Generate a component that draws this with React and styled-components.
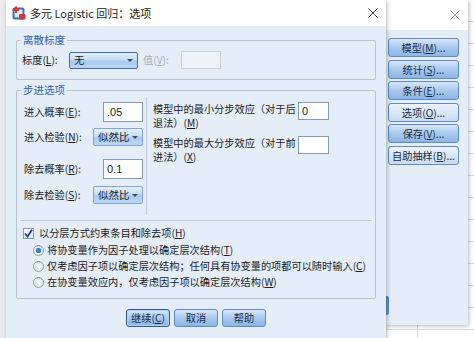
import React from 'react';
import styled, { createGlobalStyle } from 'styled-components';

const GlobalStyle = createGlobalStyle`
  html, body { margin: 0; padding: 0; }
  body {
    width: 474px;
    height: 338px;
    overflow: hidden;
    font-family: "Noto Sans CJK SC", "Noto Sans", sans-serif;
    color: #1c1c1c;
  }
`;

const Desktop = styled.div`
  position: relative;
  width: 474px;
  height: 338px;
  overflow: hidden;
  background-color: #fff;
  background-image:
    linear-gradient(to right, #ececec 0 6px, transparent 6px),
    linear-gradient(to right, transparent 417px, #d6d6d6 417px 418px, transparent 418px),
    repeating-linear-gradient(to bottom, transparent 0 21px, #d8d8d8 21px 22px);
`;

const Window = styled.div`
  position: absolute;
  top: 0;
  left: ${p => p.$left}px;
  width: ${p => p.$width}px;
  height: ${p => p.$height}px;
  background: #e4edf8;
  display: flex;
  flex-direction: column;
  box-shadow: 1px 1px 4px rgba(0, 0, 0, 0.28);
`;

const TitleBar = styled.div`
  height: ${p => p.$h}px;
  flex: none;
  background: #fff;
  display: flex;
  align-items: center;
  padding: 0 8px 0 6px;
  font-size: 11px;
  color: #222;
`;

const Title = styled.span`
  margin-left: 4px;
  flex: 1;
  white-space: nowrap;
`;

const Close = ({ color }) => (
  <svg width="10" height="10" viewBox="0 0 10 10">
    <path d="M0.5 0.5 L9.5 9.5 M9.5 0.5 L0.5 9.5" stroke={color} strokeWidth="1" />
  </svg>
);

const AppIcon = () => (
  <svg width="14" height="14" viewBox="0 0 14 14">
    <rect x="0.5" y="1.5" width="12" height="12" rx="2" fill="#3d6fb6" />
    <rect x="2.5" y="3.5" width="8" height="8" rx="1" fill="#dbe7f6" />
    <rect x="7" y="8" width="6.5" height="5.5" rx="1" fill="#d8333a" />
    <path d="M4 0.5 V7 M0.8 3.8 H7.2" stroke="#d8333a" strokeWidth="2.2" />
  </svg>
);

const FrontBody = styled.div`
  flex: 1;
  display: flex;
  flex-direction: column;
  padding: 7px 10px 0 10px;
  font-size: 10.2px;
  line-height: 14px;
`;

const Group = styled.fieldset`
  margin: ${p => p.$mt || 0}px 0 0 0;
  padding: 0;
  min-width: 0;
  border: 1px solid #b7c4d4;
  border-radius: 2px;
`;

const Legend = styled.legend`
  margin-left: 4px;
  padding: 0 2px;
  color: #2d63b3;
  font-size: 10.5px;
  line-height: 14px;
`;

const Row = styled.div`
  display: flex;
  align-items: center;
  height: ${p => p.$h || 18}px;
  margin-top: ${p => p.$mt || 0}px;
  white-space: nowrap;
`;

const Label = styled.span`
  width: ${p => p.$w}px;
  flex: none;
  color: ${p => (p.$disabled ? '#a4aebb' : '#1c1c1c')};
`;

const TextBox = styled.div`
  width: ${p => p.$w}px;
  height: ${p => p.$h || 20}px;
  box-sizing: border-box;
  flex: none;
  border: 1px solid ${p => (p.$disabled ? '#c8d0db' : '#7f9dc4')};
  background: ${p => (p.$disabled ? '#edf2f9' : '#fff')};
  padding-left: 3px;
  display: flex;
  align-items: center;
  font-family: "Liberation Sans", Arial, sans-serif;
  font-size: 11px;
`;

const Select = styled.div`
  width: ${p => p.$w}px;
  height: ${p => p.$h || 18}px;
  box-sizing: border-box;
  flex: none;
  display: flex;
  align-items: center;
  padding: 0 4px 0 4px;
  border: 1px solid ${p => (p.$focus ? '#3b6db0' : '#7ea6d8')};
  border-radius: 2px;
  background: linear-gradient(#e6f0fb 0%, #c5dcf5 45%, #a9cbf0 55%, #bcd7f5 100%);
  font-size: 10.5px;
  white-space: nowrap;
`;

const SelectText = styled.span`
  flex: 1;
`;

const Arrow = styled.span`
  width: 0;
  height: 0;
  flex: none;
  border-left: 3px solid transparent;
  border-right: 3px solid transparent;
  border-top: 3.5px solid #3a4a60;
`;

const Inline = styled.div`
  display: flex;
  align-items: center;
  margin-left: ${p => p.$ml || 0}px;
`;

const StepTop = styled.div`
  display: flex;
`;

const LeftCol = styled.div`
  width: 130px;
  flex: none;
  box-sizing: border-box;
  padding: 0 0 11px 7px;
  border-right: 1px solid #c3cdd9;
`;

const RightCol = styled.div`
  flex: 1;
  padding-left: 6px;
`;

const Effect = styled.div`
  display: flex;
  align-items: flex-start;
  margin-top: ${p => p.$mt}px;
`;

const EffectText = styled.div`
  width: 145px;
  flex: none;
  white-space: nowrap;
`;

const Separator = styled.div`
  height: 1px;
  margin: 5px 3px 0 3px;
  background: #c3cdd9;
`;

const Hier = styled.div`
  padding: 5px 0 8px 6px;
`;

const OptRow = styled.div`
  display: flex;
  align-items: center;
  height: ${p => p.$h || 16}px;
  padding-left: ${p => p.$indent || 0}px;
  white-space: nowrap;
`;

const CheckBox = styled.span`
  width: 9px;
  height: 9px;
  flex: none;
  border: 1px solid #8b9bb1;
  background: linear-gradient(#f7f9fc, #dfe6ef);
  display: flex;
  align-items: center;
  justify-content: center;
  margin-right: 5px;
`;

const Radio = styled.span`
  width: 9px;
  height: 9px;
  flex: none;
  border-radius: 50%;
  border: 1px solid #8d9cb0;
  background: radial-gradient(circle, ${p => (p.$on ? '#3d80d8 0 2.5px, #e9eff7 3px' : '#f4f6fa 0, #dde4ee 100%')});
  margin-right: 3px;
`;

const ButtonRow = styled.div`
  display: flex;
  justify-content: center;
  gap: 4px;
  margin-top: 10px;
`;

const Button = styled.div`
  width: ${p => p.$w || 44}px;
  height: ${p => p.$h || 18}px;
  box-sizing: border-box;
  display: flex;
  align-items: center;
  justify-content: center;
  border-radius: 3px;
  border: 1px solid ${p => (p.$focus ? '#2c5a98' : '#5d8cc6')};
  box-shadow: ${p => (p.$focus ? 'inset 0 0 0 1px #b9d4f3' : 'none')};
  background: ${p =>
    p.$pale
      ? 'linear-gradient(#eef4fc 0%, #d9e7f7 50%, #c9dcf3 100%)'
      : 'linear-gradient(#d8e7f8 0%, #a9c9ef 50%, #8bb5e7 100%)'};
  color: #1a2a44;
  font-size: 10.2px;
  white-space: nowrap;
`;

const BackBody = styled.div`
  flex: 1;
  display: flex;
  flex-direction: column;
  align-items: flex-end;
  gap: 2.6px;
  padding: 8px 9px 0 0;
`;

const BackEdge = styled.div`
  position: absolute;
  left: 232px;
  top: 296px;
  width: 3px;
  height: 19px;
  border-radius: 0 2px 2px 0;
  background: #5d8cc6;
`;

const Key = ({ k }) => <>(<u>{k}</u>)</>;

export default function App() {
  return (
    <Desktop>
      <GlobalStyle />
      <Window $left={154} $width={314} $height={325}>
        <TitleBar $h={30}>
          <Title />
          <Close color="#a0a0a0" />
        </TitleBar>
        <BackBody>
          <Button $w={71} $h={19}>模型<Key k="M" />...</Button>
          <Button $w={71} $h={19}>统计<Key k="S" />...</Button>
          <Button $w={71} $h={19}>条件<Key k="E" />...</Button>
          <Button $w={71} $h={19} $pale>选项<Key k="O" />...</Button>
          <Button $w={71} $h={19}>保存<Key k="V" />...</Button>
          <Button $w={71} $h={19} $pale>自助抽样<Key k="B" />...</Button>
        </BackBody>
        <BackEdge />
      </Window>

      <Window $left={6} $width={380} $height={345}>
        <TitleBar $h={26}>
          <AppIcon />
          <Title>多元 Logistic 回归：选项</Title>
          <Close color="#444" />
        </TitleBar>
        <FrontBody>
          <Group>
            <Legend>离散标度</Legend>
            <Row $mt={4} style={{ paddingLeft: 5, marginBottom: 10 }}>
              <Label $w={47}>标度<Key k="L" />:</Label>
              <Select $w={69} $h={17} $focus>
                <SelectText>无</SelectText>
                <Arrow />
              </Select>
              <Inline $ml={5}>
                <Label $w={38} $disabled>值<Key k="V" />:</Label>
                <TextBox $w={40} $h={18} $disabled />
              </Inline>
            </Row>
          </Group>

          <Group $mt={3}>
            <Legend>步进选项</Legend>
            <StepTop>
              <LeftCol>
                <Row $h={20} $mt={5}>
                  <Label $w={79}>进入概率<Key k="E" />:</Label>
                  <TextBox $w={40}>.05</TextBox>
                </Row>
                <Row $mt={6}>
                  <Label $w={69}>进入检验<Key k="N" />:</Label>
                  <Select $w={50}>
                    <SelectText>似然比</SelectText>
                    <Arrow />
                  </Select>
                </Row>
                <Row $h={20} $mt={13}>
                  <Label $w={79}>除去概率<Key k="R" />:</Label>
                  <TextBox $w={40}>0.1</TextBox>
                </Row>
                <Row $mt={7}>
                  <Label $w={69}>除去检验<Key k="S" />:</Label>
                  <Select $w={50}>
                    <SelectText>似然比</SelectText>
                    <Arrow />
                  </Select>
                </Row>
              </LeftCol>
              <RightCol>
                <Effect $mt={5}>
                  <EffectText>模型中的最小分步效应（对于后<br />退法）<Key k="M" /></EffectText>
                  <TextBox $w={31} $h={18}>0</TextBox>
                </Effect>
                <Effect $mt={6}>
                  <EffectText>模型中的最大分步效应（对于前<br />进法）<Key k="X" /></EffectText>
                  <TextBox $w={31} $h={18} />
                </Effect>
              </RightCol>
            </StepTop>
            <Separator />
            <Hier>
              <OptRow $h={14}>
                <CheckBox>
                  <svg width="9" height="9" viewBox="0 0 9 9">
                    <path d="M1 4.5 L3.5 7.5 L8 0.8" stroke="#1d3aa0" strokeWidth="1.8" fill="none" />
                  </svg>
                </CheckBox>
                以分层方式约束条目和除去项<Key k="H" />
              </OptRow>
              <OptRow $indent={10} style={{ marginTop: 2 }}>
                <Radio $on />将协变量作为因子处理以确定层次结构<Key k="T" />
              </OptRow>
              <OptRow $indent={10}>
                <Radio />仅考虑因子项以确定层次结构；任何具有协变量的项都可以随时输入<Key k="C" />
              </OptRow>
              <OptRow $indent={10}>
                <Radio />在协变量效应内，仅考虑因子项以确定层次结构<Key k="W" />
              </OptRow>
            </Hier>
          </Group>

          <ButtonRow>
            <Button $focus>继续<Key k="C" /></Button>
            <Button>取消</Button>
            <Button>帮助</Button>
          </ButtonRow>
        </FrontBody>
      </Window>
    </Desktop>
  );
}
